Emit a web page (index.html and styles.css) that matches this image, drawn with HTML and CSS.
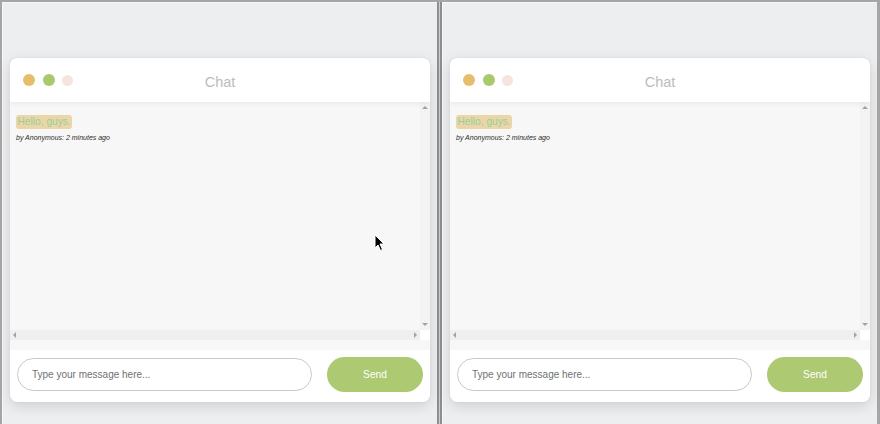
FILE: index.html
```html
<!DOCTYPE html>
<html lang="en">
<head>
<meta charset="utf-8">
<title>Chat</title>
<link rel="stylesheet" href="styles.css">
</head>
<body>
  <section class="pane">
    <div class="window">
      <header class="header">
        <div class="dots">
          <span class="dot dot-orange"></span>
          <span class="dot dot-green"></span>
          <span class="dot dot-pink"></span>
        </div>
        <h1 class="title">Chat</h1>
        <div></div>
      </header>
      <div class="body">
        <div class="scroll">
          <div class="messages">
            <div class="message"><span class="bubble">Hello, guys.</span></div>
            <div class="meta">by Anonymous: 2 minutes ago</div>
          </div>
          <div class="vbar"><span class="arr arr-up"></span><span class="arr arr-down"></span></div>
          <div class="hbar"><span class="arr arr-left"></span><span class="arr arr-right"></span></div>
          <div class="corner"></div>
        </div>
      </div>
      <form class="footer">
        <input class="input" type="text" placeholder="Type your message here...">
        <button class="send" type="button">Send</button>
      </form>
    </div>
    <svg class="cursor" width="12" height="18" viewBox="0 0 12 18"><path d="M1 1 L1 14 L4 11 L6.5 16.5 L8.5 15.5 L6 10 L10 10 Z" fill="#000" stroke="#fff" stroke-width="1" stroke-linejoin="round"/></svg>
  </section>
  <div class="divider"></div>
  <section class="pane">
    <div class="window">
      <header class="header">
        <div class="dots">
          <span class="dot dot-orange"></span>
          <span class="dot dot-green"></span>
          <span class="dot dot-pink"></span>
        </div>
        <h1 class="title">Chat</h1>
        <div></div>
      </header>
      <div class="body">
        <div class="scroll">
          <div class="messages">
            <div class="message"><span class="bubble">Hello, guys.</span></div>
            <div class="meta">by Anonymous: 2 minutes ago</div>
          </div>
          <div class="vbar"><span class="arr arr-up"></span><span class="arr arr-down"></span></div>
          <div class="hbar"><span class="arr arr-left"></span><span class="arr arr-right"></span></div>
          <div class="corner"></div>
        </div>
      </div>
      <form class="footer">
        <input class="input" type="text" placeholder="Type your message here...">
        <button class="send" type="button">Send</button>
      </form>
    </div>
  </section>
</body>
</html>
```
FILE: styles.css
```css
* { box-sizing: border-box; }
html, body { margin: 0; padding: 0; }
body {
  width: 880px;
  height: 424px;
  overflow: hidden;
  display: flex;
  padding: 2px 3px 0 2px;
  background: #a6a6a6;
  font-family: "Liberation Sans", Arial, sans-serif;
}
.divider {
  width: 5px;
  background: linear-gradient(to right, #8e8e8e 0 2px, #cfcfcf 2px 3px, #8e8e8e 3px 5px);
}
.pane {
  position: relative;
  width: 435px;
  height: 422px;
  background: #edeef0;
  box-shadow: inset 1px 1px 0 #f7f7f8;
  padding: 56px 7px 0 8px;
}
.window {
  width: 420px;
  height: 344px;
  background: #fff;
  border-radius: 8px;
  overflow: hidden;
  display: flex;
  flex-direction: column;
  box-shadow: 0 4px 14px rgba(0,0,0,0.13), 0 0 3px rgba(0,0,0,0.05);
}
.header {
  height: 44px;
  flex: none;
  display: grid;
  grid-template-columns: 1fr auto 1fr;
  align-items: center;
  background: #fff;
  position: relative;
  z-index: 1;
  box-shadow: 0 1px 6px rgba(0,0,0,0.07);
}
.dots {
  display: flex;
  align-items: center;
  padding-left: 13px;
}
.dot {
  display: block;
  width: 12px;
  height: 12px;
  border-radius: 50%;
}
.dot-orange { background: #e6bd6b; }
.dot-green { background: #a9c96d; margin-left: 8px; }
.dot-pink { background: #f5e5de; width: 11px; height: 11px; margin-left: 7px; }
.title {
  margin: 0;
  font-size: 14.5px;
  font-weight: normal;
  color: #bcbcbc;
  padding-top: 3px;
}
.body {
  flex: none;
  height: 248px;
  background: #f7f7f7;
  padding-bottom: 10px;
}
.scroll {
  height: 238px;
  display: grid;
  grid-template-columns: 1fr 10px;
  grid-template-rows: 1fr 10px;
}
.messages {
  padding: 13px 6px;
}
.message {
  display: flex;
}
.bubble {
  display: block;
  background: #ecd6a8;
  color: #96d09a;
  font-size: 10.2px;
  line-height: 14px;
  padding: 0 1.5px;
  border-radius: 3px;
}
.meta {
  margin-top: 4px;
  font-size: 7px;
  line-height: 9px;
  font-style: italic;
  color: #2b2b2b;
}
.vbar {
  background: #f3f3f3;
  display: flex;
  flex-direction: column;
  justify-content: space-between;
  align-items: center;
  padding: 4px 0 4px;
}
.hbar {
  background: #efefef;
  display: flex;
  justify-content: space-between;
  align-items: center;
  padding: 0 3px 0 3px;
}
.corner { background: #fff; }
.arr { display: block; width: 0; height: 0; }
.arr-up { border-left: 3px solid transparent; border-right: 3px solid transparent; border-bottom: 3px solid #a3a3a3; }
.arr-down { border-left: 3px solid transparent; border-right: 3px solid transparent; border-top: 3px solid #a3a3a3; }
.arr-left { border-top: 3px solid transparent; border-bottom: 3px solid transparent; border-right: 3px solid #a3a3a3; }
.arr-right { border-top: 3px solid transparent; border-bottom: 3px solid transparent; border-left: 3px solid #a3a3a3; }
.footer {
  flex: 1;
  margin: 0;
  background: #fff;
  display: flex;
  align-items: center;
  gap: 15px;
  padding: 0 7px 3px 7px;
}
.input {
  flex: 1;
  min-width: 0;
  height: 33px;
  border: 1px solid #c8c8c8;
  border-radius: 17px;
  padding: 0 14px;
  font-family: "Liberation Sans", Arial, sans-serif;
  font-size: 10px;
  color: #555;
  background: #fff;
  outline: none;
}
.input::placeholder { color: #717171; }
.send {
  width: 96px;
  height: 35px;
  border: 0;
  border-radius: 18px;
  background: #adc972;
  color: #fff;
  font-family: "Liberation Sans", Arial, sans-serif;
  font-size: 10.2px;
}
.cursor {
  position: absolute;
  left: 372px;
  top: 232px;
}
```
